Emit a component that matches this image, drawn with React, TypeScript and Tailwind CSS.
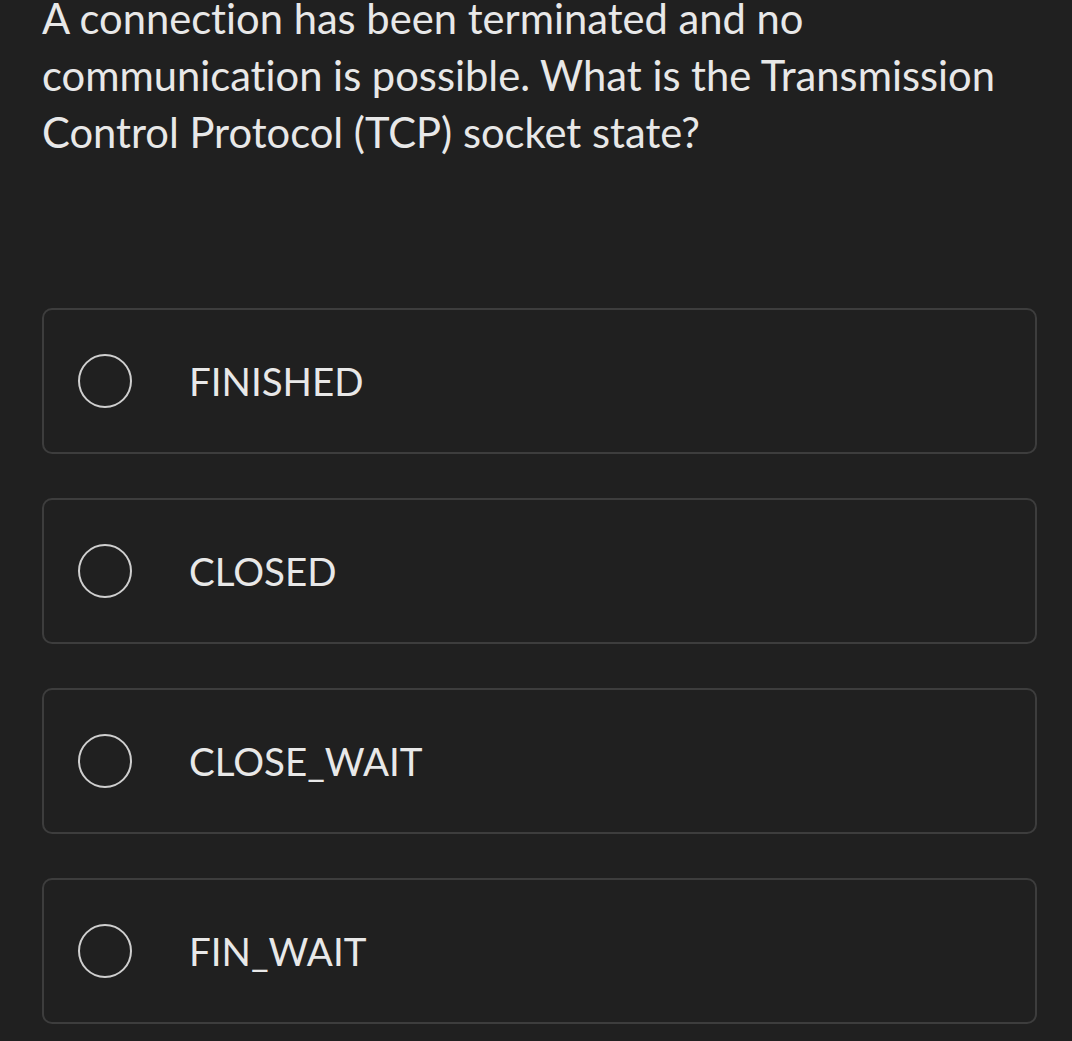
const options = ["FINISHED", "CLOSED", "CLOSE_WAIT", "FIN_WAIT"];

function Option({ label }: { label: string }) {
  return (
    <label className="flex h-[146px] cursor-pointer items-center rounded-[10px] border-2 border-[#3d3d3d] pl-[34px]">
      <span className="h-[54px] w-[54px] shrink-0 rounded-full border-2 border-[#cfcfcf]" />
      <span className="ml-[57px] text-[38.5px] leading-none text-[#e8e8e8]">{label}</span>
    </label>
  );
}

export default function App() {
  return (
    <div className="min-h-screen overflow-hidden bg-[#202020] pl-[42px] pr-[35px] pt-px font-['Lato',sans-serif] [font-variant-ligatures:none]">
      <h1 className="-mt-[11px] text-[41.7px] leading-[57px] font-normal text-[#e8e8e8]">
        A connection has been terminated and no
        <br />
        communication is possible. What is the Transmission
        <br />
        Control Protocol (TCP) socket state?
      </h1>
      <div className="mt-[147px] flex flex-col gap-[44px]">
        {options.map((o) => (
          <Option key={o} label={o} />
        ))}
      </div>
    </div>
  );
}
